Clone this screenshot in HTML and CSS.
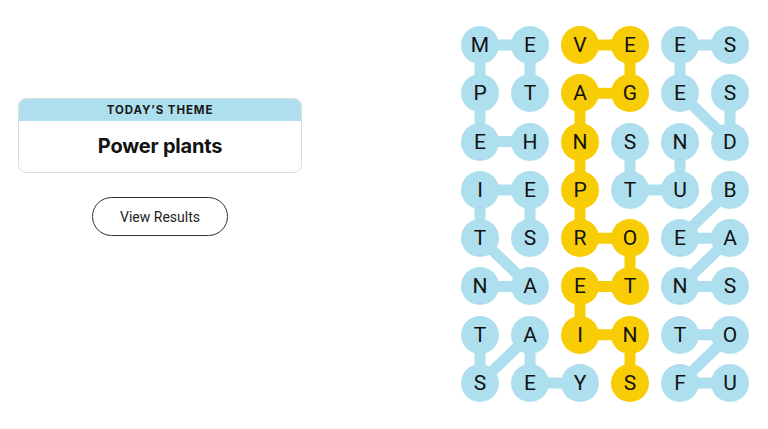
FILE: index.html
```html
<!DOCTYPE html>
<html lang="en">
<head>
<meta charset="utf-8">
<title>Strands</title>
<link rel="stylesheet" href="styles.css">
</head>
<body>
<main class="page">
  <section class="side">
    <div class="theme-card">
      <div class="theme-head">TODAY’S THEME</div>
      <div class="theme-body">Power plants</div>
    </div>
    <button class="results-btn" type="button">View Results</button>
  </section>

  <section class="board">
    <svg class="links" width="288" height="377" viewBox="0 0 288 377" aria-hidden="true">
      <g class="blue-links">
        <!-- TEMPEH -->
        <line x1="69" y1="67.3" x2="69" y2="19"/>
        <line x1="69" y1="19" x2="19" y2="19"/>
        <line x1="19" y1="19" x2="19" y2="67.3"/>
        <line x1="19" y1="67.3" x2="19" y2="115.6"/>
        <line x1="19" y1="115.6" x2="69" y2="115.6"/>
        <!-- SEITAN -->
        <line x1="69" y1="212.2" x2="69" y2="163.9"/>
        <line x1="69" y1="163.9" x2="19" y2="163.9"/>
        <line x1="19" y1="163.9" x2="19" y2="212.2"/>
        <line x1="19" y1="212.2" x2="69" y2="260.5"/>
        <line x1="69" y1="260.5" x2="19" y2="260.5"/>
        <!-- YEAST -->
        <line x1="119" y1="357.1" x2="69" y2="357.1"/>
        <line x1="69" y1="357.1" x2="69" y2="308.8"/>
        <line x1="69" y1="308.8" x2="19" y2="357.1"/>
        <line x1="19" y1="357.1" x2="19" y2="308.8"/>
        <!-- SEEDS -->
        <line x1="269" y1="19" x2="219" y2="19"/>
        <line x1="219" y1="19" x2="219" y2="67.3"/>
        <line x1="219" y1="67.3" x2="269" y2="115.6"/>
        <line x1="269" y1="115.6" x2="269" y2="67.3"/>
        <!-- NUTS -->
        <line x1="219" y1="115.6" x2="219" y2="163.9"/>
        <line x1="219" y1="163.9" x2="169" y2="163.9"/>
        <line x1="169" y1="163.9" x2="169" y2="115.6"/>
        <!-- BEANS -->
        <line x1="269" y1="163.9" x2="219" y2="212.2"/>
        <line x1="219" y1="212.2" x2="269" y2="212.2"/>
        <line x1="269" y1="212.2" x2="219" y2="260.5"/>
        <line x1="219" y1="260.5" x2="269" y2="260.5"/>
        <!-- TOFU -->
        <line x1="219" y1="308.8" x2="269" y2="308.8"/>
        <line x1="269" y1="308.8" x2="219" y2="357.1"/>
        <line x1="219" y1="357.1" x2="269" y2="357.1"/>
      </g>
      <g class="span-links">
        <line x1="119" y1="19" x2="169" y2="19"/>
        <line x1="169" y1="19" x2="169" y2="67.3"/>
        <line x1="169" y1="67.3" x2="119" y2="67.3"/>
        <line x1="119" y1="67.3" x2="119" y2="115.6"/>
        <line x1="119" y1="115.6" x2="119" y2="163.9"/>
        <line x1="119" y1="163.9" x2="119" y2="212.2"/>
        <line x1="119" y1="212.2" x2="169" y2="212.2"/>
        <line x1="169" y1="212.2" x2="169" y2="260.5"/>
        <line x1="169" y1="260.5" x2="119" y2="260.5"/>
        <line x1="119" y1="260.5" x2="119" y2="308.8"/>
        <line x1="119" y1="308.8" x2="169" y2="308.8"/>
        <line x1="169" y1="308.8" x2="169" y2="357.1"/>
      </g>
    </svg>
    <div class="grid">
      <div class="cell word">M</div><div class="cell word">E</div><div class="cell span">V</div><div class="cell span">E</div><div class="cell word">E</div><div class="cell word">S</div>
      <div class="cell word">P</div><div class="cell word">T</div><div class="cell span">A</div><div class="cell span">G</div><div class="cell word">E</div><div class="cell word">S</div>
      <div class="cell word">E</div><div class="cell word">H</div><div class="cell span">N</div><div class="cell word">S</div><div class="cell word">N</div><div class="cell word">D</div>
      <div class="cell word">I</div><div class="cell word">E</div><div class="cell span">P</div><div class="cell word">T</div><div class="cell word">U</div><div class="cell word">B</div>
      <div class="cell word">T</div><div class="cell word">S</div><div class="cell span">R</div><div class="cell span">O</div><div class="cell word">E</div><div class="cell word">A</div>
      <div class="cell word">N</div><div class="cell word">A</div><div class="cell span">E</div><div class="cell span">T</div><div class="cell word">N</div><div class="cell word">S</div>
      <div class="cell word">T</div><div class="cell word">A</div><div class="cell span">I</div><div class="cell span">N</div><div class="cell word">T</div><div class="cell word">O</div>
      <div class="cell word">S</div><div class="cell word">E</div><div class="cell word">Y</div><div class="cell span">S</div><div class="cell word">F</div><div class="cell word">U</div>
    </div>
  </section>
</main>
</body>
</html>
```

FILE: styles.css
```css
* {
  box-sizing: border-box;
}

html, body {
  margin: 0;
  padding: 0;
  background: #ffffff;
}

body {
  width: 768px;
  height: 429px;
  overflow: hidden;
  font-family: "Inter", "Roboto", "Liberation Sans", sans-serif;
  color: #121212;
}

.page {
  display: flex;
  justify-content: space-between;
  align-items: flex-start;
  padding-right: 19px;
}

.side {
  width: 320px;
  padding: 98px 18px 0 18px;
  display: flex;
  flex-direction: column;
  align-items: center;
}

.theme-card {
  width: 284px;
  border: 1px solid #dcdcdc;
  border-radius: 8px;
  overflow: hidden;
}

.theme-head {
  height: 22px;
  background: #aedfee;
  display: flex;
  align-items: center;
  justify-content: center;
  font-size: 11.5px;
  font-weight: 700;
  letter-spacing: 0.9px;
  color: #1a1a1a;
}

.theme-body {
  height: 51px;
  display: flex;
  align-items: center;
  justify-content: center;
  font-size: 20px;
  font-weight: 700;
  letter-spacing: -0.2px;
  color: #121212;
  padding-bottom: 2px;
}

.results-btn {
  margin-top: 24px;
  width: 136px;
  height: 39px;
  border: 1px solid #333333;
  border-radius: 20px;
  background: #ffffff;
  font-family: "Roboto", "Liberation Sans", sans-serif;
  font-size: 14px;
  color: #222222;
  padding: 0;
}

.board {
  position: relative;
  margin-top: 26px;
  width: 288px;
  height: 377px;
}

.links {
  position: absolute;
  left: 0;
  top: 0;
}

.links line {
  stroke-width: 11;
  stroke-linecap: round;
}

.blue-links line {
  stroke: #aedfee;
}

.span-links line {
  stroke: #f8cd05;
}

.grid {
  position: relative;
  display: grid;
  grid-template-columns: repeat(6, 38px);
  grid-auto-rows: 38px;
  column-gap: 12px;
  row-gap: 10.3px;
}

.cell {
  width: 38px;
  height: 38px;
  border-radius: 50%;
  display: flex;
  align-items: center;
  justify-content: center;
  font-family: "Roboto", "Liberation Sans", sans-serif;
  font-size: 21px;
  font-weight: 400;
  color: #121212;
}

.word {
  background: #aedfee;
}

.span {
  background: #f8cd05;
}
```
